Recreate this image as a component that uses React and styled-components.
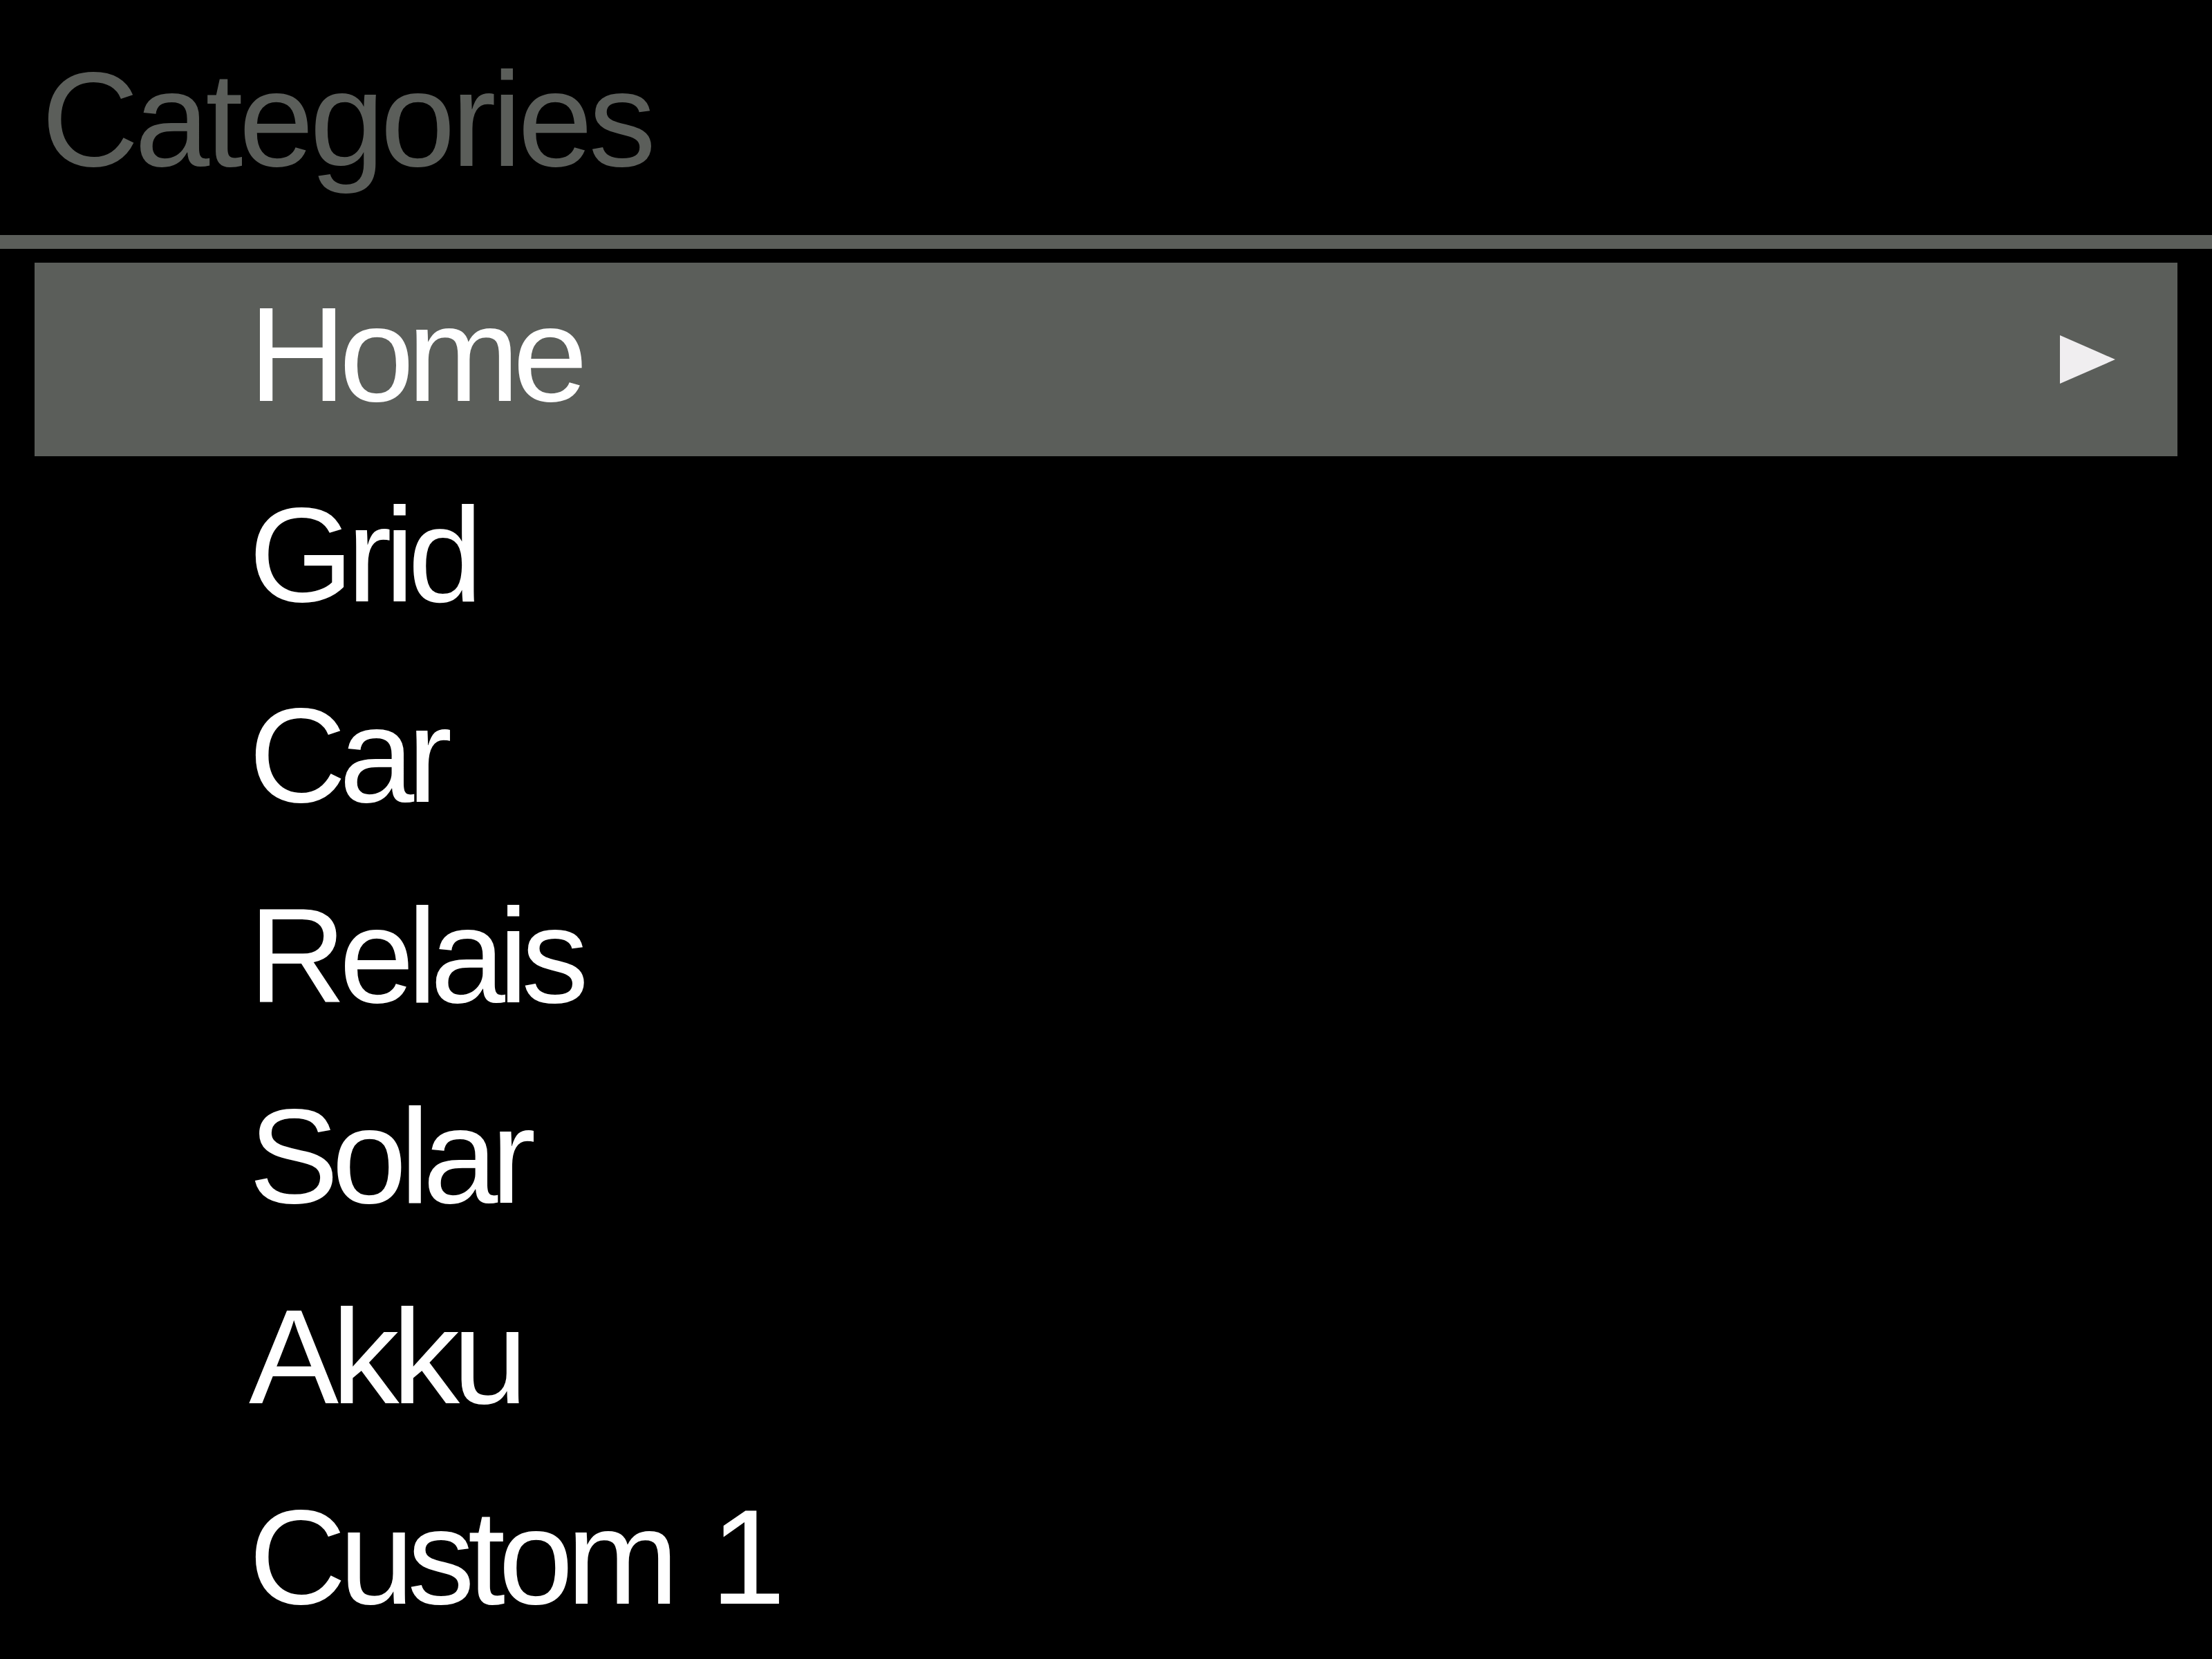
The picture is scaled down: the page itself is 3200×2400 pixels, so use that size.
import styled, { createGlobalStyle } from 'styled-components';

const GlobalStyle = createGlobalStyle`
  html, body {
    margin: 0;
    padding: 0;
    background: #000;
  }
  body {
    font-family: "Liberation Sans", Arial, sans-serif;
  }
`;

const Screen = styled.div`
  width: 3200px;
  height: 2400px;
  background: #000;
  overflow: hidden;
  display: flex;
  flex-direction: column;
`;

const Header = styled.div`
  height: 340px;
  box-sizing: border-box;
  padding: 75px 0 0 60px;
  font-size: 195px;
  line-height: 195px;
  letter-spacing: -6px;
  color: #5b5e5a;
`;

const Divider = styled.div`
  height: 20px;
  background: #5b5e5a;
`;

const List = styled.ul`
  list-style: none;
  margin: 20px 0 0;
  padding: 0 50px;
  display: flex;
  flex-direction: column;
  gap: 10px;
`;

const Row = styled.li`
  height: 280px;
  box-sizing: border-box;
  padding: 0 90px 0 310px;
  display: flex;
  justify-content: space-between;
  align-items: flex-start;
  background: ${(p) => (p.$active ? '#5b5e5a' : 'transparent')};
`;

const Label = styled.span`
  font-size: 195px;
  line-height: 264px;
  letter-spacing: -10px;
  word-spacing: 12px;
  color: #fff;
  white-space: pre;
`;

const Arrow = styled.svg`
  width: 80px;
  height: 80px;
  margin-top: 100px;
  flex: none;
`;

const categories = ['Home', 'Grid', 'Car', 'Relais', 'Solar', 'Akku', 'Custom 1'];

export default function App() {
  return (
    <Screen>
      <GlobalStyle />
      <Header>Categories</Header>
      <Divider />
      <List>
        {categories.map((name, i) => (
          <Row key={name} $active={i === 0}>
            <Label>{name}</Label>
            {i === 0 && (
              <Arrow viewBox="0 0 80 80">
                <polygon points="0,5 80,40 0,75" fill="#f0eef0" />
              </Arrow>
            )}
          </Row>
        ))}
      </List>
    </Screen>
  );
}
